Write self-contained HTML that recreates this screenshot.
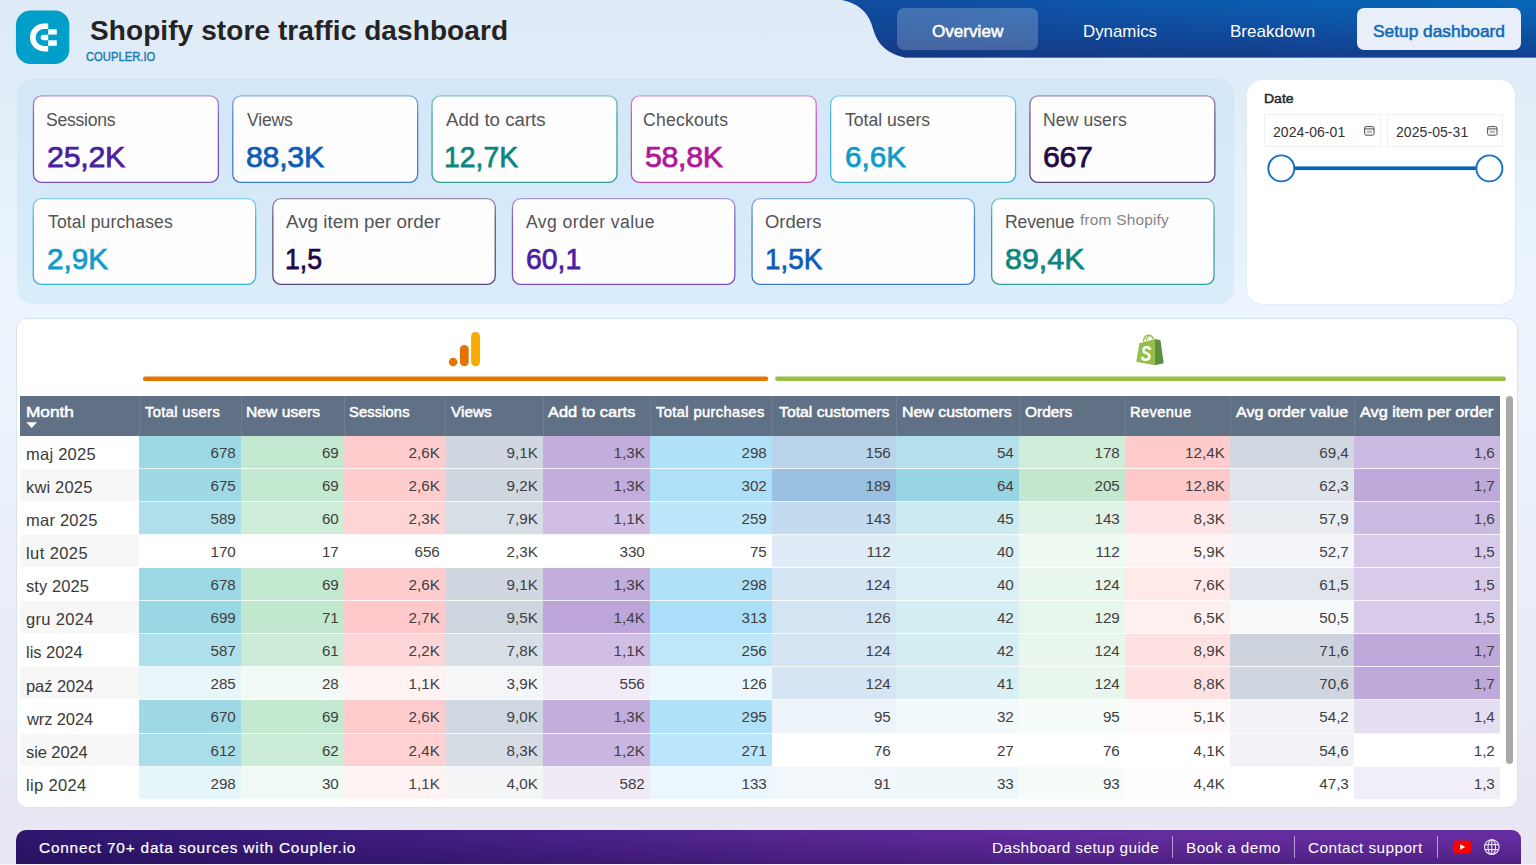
<!DOCTYPE html>
<html lang="en"><head><meta charset="utf-8"><title>Shopify store traffic dashboard</title>
<style>
*{box-sizing:border-box;margin:0;padding:0}
html,body{width:1536px;height:865px;overflow:hidden}
body{position:relative;font-family:"Liberation Sans",sans-serif;color:#333;
 background:linear-gradient(180deg,#dfebf7 0px,#e0ecf7 80px,#e5f0f9 160px,#ecf5fd 310px,#ebf2fb 450px,#e9edf8 640px,#e8e8f4 790px,#e8e7f3 865px)}
.abs{position:absolute}
.t{position:absolute;white-space:nowrap;line-height:1}
/* header */
.logo{position:absolute;left:16px;top:10.4px;width:53.5px;height:53.6px;border-radius:14.5px;background:#009fca}
.title{left:90px;top:15px;font-size:27.5px;font-weight:700;color:#252423;letter-spacing:-0.2px}
.brand{left:87px;top:51.5px;font-size:11px;font-weight:700;color:#1a7db3;letter-spacing:0px}
.nav{position:absolute;left:820px;top:0;width:716px;height:60px}
.btn{position:absolute;top:7.8px;height:42.7px;border-radius:7px}
.btn.ov{left:897px;width:141.4px;background:rgba(255,255,255,.21)}
.btn.su{left:1357px;width:164.2px;background:#e8eff9}
.nt{font-size:16px;color:#fff;top:22.5px}
/* kpi */
.kpanel{position:absolute;left:17px;top:79.3px;width:1217px;height:225px;border-radius:15px;background:linear-gradient(180deg,#d3e7f8 0%,#d5e9f9 50%,#d9edfb 100%)}
.card{position:absolute;height:88px;border-radius:8.5px;background:#fdfdfe;border:1.3px solid #888}
.card .l{position:absolute;left:12.8px;top:15px;font-size:17.5px;color:#4d4d4d;white-space:nowrap;line-height:1}
.card .v{position:absolute;left:13.2px;top:45px;font-size:31px;font-weight:700;white-space:nowrap;line-height:1}
.card .l small{font-size:14.5px;color:#777}
.r1{top:95.2px;width:186.2px}
.r2{top:197.9px;width:223.8px}
/* date */
.dpanel{position:absolute;left:1247px;top:79.5px;width:268.4px;height:224.5px;border-radius:15px;background:#fff;box-shadow:0 0 0 0.6px #dbe7f1}
.dlabel{left:1265px;top:92px;font-size:13px;font-weight:700;color:#252423}
.dinput{position:absolute;top:114px;height:33px;border:1px solid #f0f0f2;background:#fff}
.dinput .t{left:9.5px;top:9.5px;font-size:13.8px;color:#333}
.track{position:absolute;left:1281px;top:166.4px;width:208px;height:3.7px;background:#0c62b5}
.knob{position:absolute;top:154.5px;width:28px;height:28px;border-radius:50%;background:#fff;border:1.9px solid #1a6fc0}
/* table panel */
.tpanel{position:absolute;left:16px;top:317.8px;width:1502px;height:490.3px;border-radius:11px;background:#fff;border:1px solid #d7e5f0}
.bar{position:absolute;top:376.4px;height:4.6px;border-radius:2.3px}
.tbl{position:absolute;left:0;top:0}
.th{position:absolute;top:395.5px;height:40.5px;background:#617185;border-left:1px solid #6e7d91;color:#fff;font-weight:700;font-size:14.5px;white-space:nowrap}
.th:first-child{border-left:none}
.th .ht{position:absolute;left:6px;top:8.5px;line-height:1}
.th .sort{position:absolute;left:6px;top:26.8px;width:0;height:0;border-left:5.3px solid transparent;border-right:5.3px solid transparent;border-top:5.8px solid #fff}
.tr{position:absolute;left:0;width:1536px}
.mc,.td{position:absolute;top:0;height:100%;white-space:nowrap;border-bottom:1px solid rgba(255,255,255,.8)}
.mc{font-size:16px;color:#333;padding-left:6px;line-height:36.5px}
.td{font-size:15.2px;color:#404040;text-align:right;padding-right:5.2px;line-height:33.6px}
.sbar{position:absolute;left:1506px;top:396px;width:7px;height:368px;border-radius:3.5px;background:#a9a9a9}
/* footer */
.footer{position:absolute;left:16.1px;top:829.8px;width:1505px;height:33.8px;border-radius:10px 9px 0 0;
 background:linear-gradient(90deg,#2e176d 0%,#3e1d7f 25%,#552691 50%,#652c9e 75%,#672da0 100%)}
.footer:after{content:"";position:absolute;left:0;top:0;right:0;bottom:0;border-radius:inherit;background:linear-gradient(180deg,rgba(20,0,60,0) 15%,rgba(20,0,60,.27) 100%)}
.ft{font-size:15.5px;color:#fff;top:840px}
.sep{position:absolute;top:836.2px;width:1px;height:21.6px;background:rgba(255,255,255,.55)}
.strip{position:absolute;left:0;top:863.6px;width:1536px;height:2px;background:#f3f3f8}

</style></head>
<body>
<!-- header -->
<svg class="abs" style="left:10px;top:5px" width="70" height="65" viewBox="10 5 70 65">
 <rect x="15.95" y="10.45" width="53.4" height="53.55" rx="14.5" fill="#009fca"/>
 <path fill="#fff" d="M48.2 23.4 L44 23.4 A14 14 0 0 0 44 51.4 L48.2 51.4 L48.2 45.9 L44 45.9 A8.4 8.4 0 0 1 44 29.1 L48.2 29.1 Z"/>
 <path fill="#fff" d="M48.2 34.7 L43.5 34.7 A2.8 2.8 0 0 0 43.5 40.3 L48.2 40.3 Z"/>
 <rect fill="#fff" x="48.2" y="29.3" width="8.6" height="5.3"/>
 <rect fill="#fff" x="48.2" y="40.3" width="8.6" height="5.5"/>
</svg>
<svg class="abs" style="left:820px;top:0" width="716" height="60" viewBox="820 0 716 60">
 <defs><linearGradient id="ng" x1="0" y1="1" x2="1" y2="0" gradientUnits="objectBoundingBox">
  <stop offset="0" stop-color="#153a85"/><stop offset="0.5" stop-color="#104c9f"/><stop offset="1" stop-color="#0669ba"/></linearGradient>
  <linearGradient id="ng2" x1="0" y1="0" x2="0" y2="1"><stop offset="0" stop-color="#0b5fb3" stop-opacity="0.0"/><stop offset="1" stop-color="#15357f" stop-opacity="0.55"/></linearGradient></defs>
 <path fill="url(#ng)" d="M836 -1 C856 1.5 866.5 10.5 871.3 23.3 C875.5 36 878 51 905 57.5 L1536 57.5 L1536 -1 Z"/>
 <path fill="url(#ng2)" d="M836 -1 C856 1.5 866.5 10.5 871.3 23.3 C875.5 36 878 51 905 57.5 L1536 57.5 L1536 -1 Z"/>
</svg>
<div class="btn ov"></div>
<div class="btn su"></div>

<!-- KPI panel -->
<div class="kpanel"></div>
<svg class="abs" style="left:17px;top:79px" width="1218" height="225" viewBox="17 79 1218 225"><defs>
<linearGradient id="g_purple" x1="0" y1="0" x2="0" y2="1"><stop offset="0" stop-color="#ad92d7"/><stop offset="0.25" stop-color="#855ec3"/><stop offset="1" stop-color="#7a50be"/></linearGradient>
<linearGradient id="g_blue" x1="0" y1="0" x2="0" y2="1"><stop offset="0" stop-color="#86aede"/><stop offset="0.25" stop-color="#4c86ce"/><stop offset="1" stop-color="#3c7cca"/></linearGradient>
<linearGradient id="g_teal" x1="0" y1="0" x2="0" y2="1"><stop offset="0" stop-color="#83c2be"/><stop offset="0.25" stop-color="#47a49e"/><stop offset="1" stop-color="#379c96"/></linearGradient>
<linearGradient id="g_magenta" x1="0" y1="0" x2="0" y2="1"><stop offset="0" stop-color="#dc90d1"/><stop offset="0.25" stop-color="#cb5abb"/><stop offset="1" stop-color="#c64cb5"/></linearGradient>
<linearGradient id="g_cyan" x1="0" y1="0" x2="0" y2="1"><stop offset="0" stop-color="#85cee6"/><stop offset="0.25" stop-color="#4bb6d9"/><stop offset="1" stop-color="#3bb0d6"/></linearGradient>
<linearGradient id="g_dark" x1="0" y1="0" x2="0" y2="1"><stop offset="0" stop-color="#998dab"/><stop offset="0.25" stop-color="#675683"/><stop offset="1" stop-color="#5a4778"/></linearGradient>
</defs>
<rect x="33.45" y="95.85" width="184.90" height="86.60" rx="8.2" fill="#fdfdfe" stroke="url(#g_purple)" stroke-width="1.3"/>
<rect x="232.75" y="95.85" width="184.90" height="86.60" rx="8.2" fill="#fdfdfe" stroke="url(#g_blue)" stroke-width="1.3"/>
<rect x="432.05" y="95.85" width="184.90" height="86.60" rx="8.2" fill="#fdfdfe" stroke="url(#g_teal)" stroke-width="1.3"/>
<rect x="631.35" y="95.85" width="184.90" height="86.60" rx="8.2" fill="#fdfdfe" stroke="url(#g_magenta)" stroke-width="1.3"/>
<rect x="830.65" y="95.85" width="184.90" height="86.60" rx="8.2" fill="#fdfdfe" stroke="url(#g_cyan)" stroke-width="1.3"/>
<rect x="1029.95" y="95.85" width="184.90" height="86.60" rx="8.2" fill="#fdfdfe" stroke="url(#g_dark)" stroke-width="1.3"/>
<rect x="33.25" y="198.55" width="222.40" height="85.90" rx="8.2" fill="#fdfdfe" stroke="url(#g_cyan)" stroke-width="1.3"/>
<rect x="272.85" y="198.55" width="222.40" height="85.90" rx="8.2" fill="#fdfdfe" stroke="url(#g_dark)" stroke-width="1.3"/>
<rect x="512.45" y="198.55" width="222.40" height="85.90" rx="8.2" fill="#fdfdfe" stroke="url(#g_purple)" stroke-width="1.3"/>
<rect x="752.05" y="198.55" width="222.40" height="85.90" rx="8.2" fill="#fdfdfe" stroke="url(#g_blue)" stroke-width="1.3"/>
<rect x="991.65" y="198.55" width="222.40" height="85.90" rx="8.2" fill="#fdfdfe" stroke="url(#g_teal)" stroke-width="1.3"/>
</svg>

<!-- Date panel -->
<div class="dpanel"></div>
<div class="dinput" style="left:1264.3px;width:116.3px">
 <svg class="abs" style="left:99px;top:10.5px" width="11" height="10" viewBox="0 0 11 10"><rect x="0.6" y="0.6" width="9.4" height="8.6" rx="1.6" fill="#fff" stroke="#4a4a4a" stroke-width="1"/><line x1="0.6" y1="2.9" x2="10" y2="2.9" stroke="#4a4a4a" stroke-width="1"/><rect x="2.6" y="4.6" width="5.4" height="2.6" fill="#bbb"/></svg></div>
<div class="dinput" style="left:1386.8px;width:116px">
 <svg class="abs" style="left:99px;top:10.5px" width="11" height="10" viewBox="0 0 11 10"><rect x="0.6" y="0.6" width="9.4" height="8.6" rx="1.6" fill="#fff" stroke="#4a4a4a" stroke-width="1"/><line x1="0.6" y1="2.9" x2="10" y2="2.9" stroke="#4a4a4a" stroke-width="1"/><rect x="2.6" y="4.6" width="5.4" height="2.6" fill="#bbb"/></svg></div>
<svg class="abs" style="left:1260px;top:150px" width="250" height="38" viewBox="1260 150 250 38">
 <rect x="1281" y="166.4" width="208" height="3.7" fill="#0c62b5"/>
 <circle cx="1281.3" cy="168.4" r="13" fill="#fff" stroke="#1a6fc0" stroke-width="1.9"/>
 <circle cx="1489.4" cy="168.4" r="13" fill="#fff" stroke="#1a6fc0" stroke-width="1.9"/>
</svg>

<!-- Table panel -->
<div class="tpanel"></div>
<svg class="abs" style="left:130px;top:370px" width="1390" height="70" viewBox="130 370 1390 70">
 <rect x="142.9" y="376.5" width="625.3" height="4.4" rx="2.2" fill="#e37400"/>
 <rect x="775.1" y="376.4" width="730.9" height="4.5" rx="2.25" fill="#95bf47"/>
</svg>
<svg class="abs" style="left:445px;top:328px" width="40" height="42" viewBox="445 328 40 42">
 <circle cx="453.1" cy="362" r="4.3" fill="#e37400"/>
 <rect x="459.9" y="344.9" width="8.8" height="21.3" rx="4.4" fill="#e37400"/>
 <rect x="471.1" y="332" width="8.9" height="34.3" rx="4.45" fill="#f9ab00"/>
</svg>
<svg class="abs" style="left:1130px;top:330px" width="40" height="40" viewBox="1130 330 40 40">
 <path d="M1143.3 341.5 C1144 337 1146.5 335.3 1148.4 335.3 C1150.6 335.3 1152.6 336.8 1153.6 339.2" fill="none" stroke="#95bf47" stroke-width="1.4"/>
 <path d="M1146.2 340.7 C1146.8 337.6 1148 336 1149.6 335.9" fill="none" stroke="#95bf47" stroke-width="1.1"/>
 <path d="M1139.4 343.2 L1154.8 339 L1154.8 365.2 L1136.3 361.7 Z" fill="#95bf47"/>
 <path d="M1154.8 339 L1160.5 340.2 L1163.7 363.2 L1154.8 365.2 Z" fill="#5e8e3e"/>
 <text transform="translate(1140.8 360.9) scale(0.8 1.16)" font-family="Liberation Sans, sans-serif" font-size="19.8" font-weight="700" font-style="italic" fill="#fff">S</text>
</svg>
<div class="sbar"></div>
<div class="tbl">
<div class="th" style="left:20.0px;width:119.0px"></div>
<div class="th" style="left:139.0px;width:102.0px"></div>
<div class="th" style="left:241.0px;width:103.0px"></div>
<div class="th" style="left:344.0px;width:101.0px"></div>
<div class="th" style="left:445.0px;width:98.0px"></div>
<div class="th" style="left:543.0px;width:107.0px"></div>
<div class="th" style="left:650.0px;width:122.0px"></div>
<div class="th" style="left:772.0px;width:124.0px"></div>
<div class="th" style="left:896.0px;width:123.0px"></div>
<div class="th" style="left:1019.0px;width:106.0px"></div>
<div class="th" style="left:1125.0px;width:105.0px"></div>
<div class="th" style="left:1230.0px;width:124.0px"></div>
<div class="th" style="left:1354.0px;width:146.0px"></div>
<div class="tr" style="top:436px;height:33px"><div class="mc" style="left:20.0px;width:119.0px;background:#ffffff"></div><div class="td" style="left:139.0px;width:102.0px;background:#9dd9e5">678</div><div class="td" style="left:241.0px;width:103.0px;background:#c3e9d0">69</div><div class="td" style="left:344.0px;width:101.0px;background:#ffccce">2,6K</div><div class="td" style="left:445.0px;width:98.0px;background:#d0d7e1">9,1K</div><div class="td" style="left:543.0px;width:107.0px;background:#c3addd">1,3K</div><div class="td" style="left:650.0px;width:122.0px;background:#b0e1f9">298</div><div class="td" style="left:772.0px;width:124.0px;background:#b8d3ea">156</div><div class="td" style="left:896.0px;width:123.0px;background:#b3e0ea">54</div><div class="td" style="left:1019.0px;width:106.0px;background:#d0edd9">178</div><div class="td" style="left:1125.0px;width:105.0px;background:#ffcbcb">12,4K</div><div class="td" style="left:1230.0px;width:124.0px;background:#d2d8e1">69,4</div><div class="td" style="left:1354.0px;width:146.0px;background:#cbbae1">1,6</div></div>
<div class="tr" style="top:469px;height:33px"><div class="mc" style="left:20.0px;width:119.0px;background:#f7f7f7"></div><div class="td" style="left:139.0px;width:102.0px;background:#9ed9e5">675</div><div class="td" style="left:241.0px;width:103.0px;background:#c3e9d0">69</div><div class="td" style="left:344.0px;width:101.0px;background:#ffccce">2,6K</div><div class="td" style="left:445.0px;width:98.0px;background:#cfd7e0">9,2K</div><div class="td" style="left:543.0px;width:107.0px;background:#c3addd">1,3K</div><div class="td" style="left:650.0px;width:122.0px;background:#afe0f9">302</div><div class="td" style="left:772.0px;width:124.0px;background:#9bc1e2">189</div><div class="td" style="left:896.0px;width:123.0px;background:#97d5e2">64</div><div class="td" style="left:1019.0px;width:106.0px;background:#c3e8cf">205</div><div class="td" style="left:1125.0px;width:105.0px;background:#ffc8c9">12,8K</div><div class="td" style="left:1230.0px;width:124.0px;background:#e0e4eb">62,3</div><div class="td" style="left:1354.0px;width:146.0px;background:#bea9da">1,7</div></div>
<div class="tr" style="top:502px;height:33px"><div class="mc" style="left:20.0px;width:119.0px;background:#ffffff"></div><div class="td" style="left:139.0px;width:102.0px;background:#aedfea">589</div><div class="td" style="left:241.0px;width:103.0px;background:#ceedd8">60</div><div class="td" style="left:344.0px;width:101.0px;background:#ffd4d5">2,3K</div><div class="td" style="left:445.0px;width:98.0px;background:#d8dee6">7,9K</div><div class="td" style="left:543.0px;width:107.0px;background:#d0bee4">1,1K</div><div class="td" style="left:650.0px;width:122.0px;background:#bee6fa">259</div><div class="td" style="left:772.0px;width:124.0px;background:#c4daee">143</div><div class="td" style="left:896.0px;width:123.0px;background:#ccebf1">45</div><div class="td" style="left:1019.0px;width:106.0px;background:#e0f3e6">143</div><div class="td" style="left:1125.0px;width:105.0px;background:#ffe4e5">8,3K</div><div class="td" style="left:1230.0px;width:124.0px;background:#e9ecf1">57,9</div><div class="td" style="left:1354.0px;width:146.0px;background:#cbbae1">1,6</div></div>
<div class="tr" style="top:535px;height:33px"><div class="mc" style="left:20.0px;width:119.0px;background:#f7f7f7"></div><div class="td" style="left:139.0px;width:102.0px;background:#ffffff">170</div><div class="td" style="left:241.0px;width:103.0px;background:#ffffff">17</div><div class="td" style="left:344.0px;width:101.0px;background:#ffffff">656</div><div class="td" style="left:445.0px;width:98.0px;background:#ffffff">2,3K</div><div class="td" style="left:543.0px;width:107.0px;background:#ffffff">330</div><div class="td" style="left:650.0px;width:122.0px;background:#ffffff">75</div><div class="td" style="left:772.0px;width:124.0px;background:#dfebf6">112</div><div class="td" style="left:896.0px;width:123.0px;background:#daf0f5">40</div><div class="td" style="left:1019.0px;width:106.0px;background:#eef9f2">112</div><div class="td" style="left:1125.0px;width:105.0px;background:#fff4f4">5,9K</div><div class="td" style="left:1230.0px;width:124.0px;background:#f4f5f8">52,7</div><div class="td" style="left:1354.0px;width:146.0px;background:#d8cbe9">1,5</div></div>
<div class="tr" style="top:568px;height:33px"><div class="mc" style="left:20.0px;width:119.0px;background:#ffffff"></div><div class="td" style="left:139.0px;width:102.0px;background:#9dd9e5">678</div><div class="td" style="left:241.0px;width:103.0px;background:#c3e9d0">69</div><div class="td" style="left:344.0px;width:101.0px;background:#ffccce">2,6K</div><div class="td" style="left:445.0px;width:98.0px;background:#d0d7e1">9,1K</div><div class="td" style="left:543.0px;width:107.0px;background:#c3addd">1,3K</div><div class="td" style="left:650.0px;width:122.0px;background:#b0e1f9">298</div><div class="td" style="left:772.0px;width:124.0px;background:#d5e5f3">124</div><div class="td" style="left:896.0px;width:123.0px;background:#daf0f5">40</div><div class="td" style="left:1019.0px;width:106.0px;background:#e9f6ed">124</div><div class="td" style="left:1125.0px;width:105.0px;background:#ffe9e9">7,6K</div><div class="td" style="left:1230.0px;width:124.0px;background:#e2e6ec">61,5</div><div class="td" style="left:1354.0px;width:146.0px;background:#d8cbe9">1,5</div></div>
<div class="tr" style="top:601px;height:33px"><div class="mc" style="left:20.0px;width:119.0px;background:#f7f7f7"></div><div class="td" style="left:139.0px;width:102.0px;background:#99d7e4">699</div><div class="td" style="left:241.0px;width:103.0px;background:#c1e8ce">71</div><div class="td" style="left:344.0px;width:101.0px;background:#ffc9cb">2,7K</div><div class="td" style="left:445.0px;width:98.0px;background:#cdd5df">9,5K</div><div class="td" style="left:543.0px;width:107.0px;background:#bda5d9">1,4K</div><div class="td" style="left:650.0px;width:122.0px;background:#abdff9">313</div><div class="td" style="left:772.0px;width:124.0px;background:#d3e4f2">126</div><div class="td" style="left:896.0px;width:123.0px;background:#d5eef3">42</div><div class="td" style="left:1019.0px;width:106.0px;background:#e6f6eb">129</div><div class="td" style="left:1125.0px;width:105.0px;background:#fff0f0">6,5K</div><div class="td" style="left:1230.0px;width:124.0px;background:#f8f9fb">50,5</div><div class="td" style="left:1354.0px;width:146.0px;background:#d8cbe9">1,5</div></div>
<div class="tr" style="top:634px;height:33px"><div class="mc" style="left:20.0px;width:119.0px;background:#ffffff"></div><div class="td" style="left:139.0px;width:102.0px;background:#afdfea">587</div><div class="td" style="left:241.0px;width:103.0px;background:#ccecd7">61</div><div class="td" style="left:344.0px;width:101.0px;background:#ffd6d8">2,2K</div><div class="td" style="left:445.0px;width:98.0px;background:#d9dfe7">7,8K</div><div class="td" style="left:543.0px;width:107.0px;background:#d0bee4">1,1K</div><div class="td" style="left:650.0px;width:122.0px;background:#bfe7fa">256</div><div class="td" style="left:772.0px;width:124.0px;background:#d5e5f3">124</div><div class="td" style="left:896.0px;width:123.0px;background:#d5eef3">42</div><div class="td" style="left:1019.0px;width:106.0px;background:#e9f6ed">124</div><div class="td" style="left:1125.0px;width:105.0px;background:#ffe1e1">8,9K</div><div class="td" style="left:1230.0px;width:124.0px;background:#cdd4de">71,6</div><div class="td" style="left:1354.0px;width:146.0px;background:#bea9da">1,7</div></div>
<div class="tr" style="top:667px;height:33px"><div class="mc" style="left:20.0px;width:119.0px;background:#f7f7f7"></div><div class="td" style="left:139.0px;width:102.0px;background:#e9f6f9">285</div><div class="td" style="left:241.0px;width:103.0px;background:#f2faf5">28</div><div class="td" style="left:344.0px;width:101.0px;background:#fff3f4">1,1K</div><div class="td" style="left:445.0px;width:98.0px;background:#f4f6f8">3,9K</div><div class="td" style="left:543.0px;width:107.0px;background:#f1ecf7">556</div><div class="td" style="left:650.0px;width:122.0px;background:#edf8fe">126</div><div class="td" style="left:772.0px;width:124.0px;background:#d5e5f3">124</div><div class="td" style="left:896.0px;width:123.0px;background:#d8eff4">41</div><div class="td" style="left:1019.0px;width:106.0px;background:#e9f6ed">124</div><div class="td" style="left:1125.0px;width:105.0px;background:#ffe1e2">8,8K</div><div class="td" style="left:1230.0px;width:124.0px;background:#cfd6df">70,6</div><div class="td" style="left:1354.0px;width:146.0px;background:#bea9da">1,7</div></div>
<div class="tr" style="top:700px;height:34px"><div class="mc" style="left:20.0px;width:119.0px;background:#ffffff"></div><div class="td" style="left:139.0px;width:102.0px;background:#9fd9e5">670</div><div class="td" style="left:241.0px;width:103.0px;background:#c3e9d0">69</div><div class="td" style="left:344.0px;width:101.0px;background:#ffccce">2,6K</div><div class="td" style="left:445.0px;width:98.0px;background:#d0d8e1">9,0K</div><div class="td" style="left:543.0px;width:107.0px;background:#c3addd">1,3K</div><div class="td" style="left:650.0px;width:122.0px;background:#b1e1f9">295</div><div class="td" style="left:772.0px;width:124.0px;background:#eef5fa">95</div><div class="td" style="left:896.0px;width:123.0px;background:#f1f9fb">32</div><div class="td" style="left:1019.0px;width:106.0px;background:#f6fcf8">95</div><div class="td" style="left:1125.0px;width:105.0px;background:#fff9f9">5,1K</div><div class="td" style="left:1230.0px;width:124.0px;background:#f1f3f6">54,2</div><div class="td" style="left:1354.0px;width:146.0px;background:#e5ddf0">1,4</div></div>
<div class="tr" style="top:734px;height:33px"><div class="mc" style="left:20.0px;width:119.0px;background:#f7f7f7"></div><div class="td" style="left:139.0px;width:102.0px;background:#aadee8">612</div><div class="td" style="left:241.0px;width:103.0px;background:#cbecd6">62</div><div class="td" style="left:344.0px;width:101.0px;background:#ffd1d3">2,4K</div><div class="td" style="left:445.0px;width:98.0px;background:#d5dce4">8,3K</div><div class="td" style="left:543.0px;width:107.0px;background:#c9b6e0">1,2K</div><div class="td" style="left:650.0px;width:122.0px;background:#bae5fa">271</div><div class="td" style="left:772.0px;width:124.0px;background:#ffffff">76</div><div class="td" style="left:896.0px;width:123.0px;background:#ffffff">27</div><div class="td" style="left:1019.0px;width:106.0px;background:#ffffff">76</div><div class="td" style="left:1125.0px;width:105.0px;background:#ffffff">4,1K</div><div class="td" style="left:1230.0px;width:124.0px;background:#f0f2f5">54,6</div><div class="td" style="left:1354.0px;width:146.0px;background:#ffffff">1,2</div></div>
<div class="tr" style="top:767px;height:33px"><div class="mc" style="left:20.0px;width:119.0px;background:#ffffff"></div><div class="td" style="left:139.0px;width:102.0px;background:#e6f5f8">298</div><div class="td" style="left:241.0px;width:103.0px;background:#f0f9f3">30</div><div class="td" style="left:344.0px;width:101.0px;background:#fff3f4">1,1K</div><div class="td" style="left:445.0px;width:98.0px;background:#f3f5f7">4,0K</div><div class="td" style="left:543.0px;width:107.0px;background:#efeaf6">582</div><div class="td" style="left:650.0px;width:122.0px;background:#ebf7fe">133</div><div class="td" style="left:772.0px;width:124.0px;background:#f2f7fb">91</div><div class="td" style="left:896.0px;width:123.0px;background:#eef8fa">33</div><div class="td" style="left:1019.0px;width:106.0px;background:#f7fcf9">93</div><div class="td" style="left:1125.0px;width:105.0px;background:#fffdfd">4,4K</div><div class="td" style="left:1230.0px;width:124.0px;background:#ffffff">47,3</div><div class="td" style="left:1354.0px;width:146.0px;background:#f2eef8">1,3</div></div>
</div>
<svg class="abs" id="sortarrow" style="left:24px;top:420px" width="16" height="10" viewBox="24 420 16 10"><path d="M26.3 422.3 L37 422.3 L31.65 428.1 Z" fill="#fff"/></svg>
<!-- footer -->
<div class="footer"></div>
<div class="strip"></div>
<div class="sep" style="left:1172px"></div>
<div class="sep" style="left:1294px"></div>
<div class="sep" style="left:1437.2px"></div>
<svg class="abs" style="left:1450px;top:836px" width="54" height="24" viewBox="1450 836 54 24">
 <rect x="1453.1" y="840.5" width="18.3" height="12.8" rx="3.4" fill="#ff0000"/>
 <path d="M1460.2 844.2 L1465.2 847 L1460.2 849.8 Z" fill="#fff"/>
 <g fill="none" stroke="#efe9f7" stroke-width="1.1">
  <circle cx="1491.8" cy="847.1" r="7.3"/>
  <ellipse cx="1491.8" cy="847.1" rx="3.8" ry="7.3"/>
  <line x1="1491.8" y1="839.8" x2="1491.8" y2="854.4"/>
  <line x1="1485" y1="844.6" x2="1498.6" y2="844.6"/>
  <line x1="1485" y1="849.6" x2="1498.6" y2="849.6"/>
 </g>
</svg>
<!-- texts -->
<div class="t" id="title" style="left:90px;top:17px;font-size:28.00px;font-weight:700;color:#252423;letter-spacing:0.087px;">Shopify store traffic dashboard</div>
<div class="t" id="brand" style="left:86.26px;top:52px;font-size:11.90px;font-weight:400;color:#1a7db3;transform:scaleX(0.9444);transform-origin:0 0;-webkit-text-stroke:0.4px #1a7db3;">COUPLER.IO</div>
<div class="t" id="n1" style="left:931.80px;top:24px;font-size:15.70px;font-weight:400;color:#fff;transform:scaleX(1.0894);transform-origin:0 0;-webkit-text-stroke:0.5px #fff;">Overview</div>
<div class="t" id="n2" style="left:1083.43px;top:24px;font-size:15.70px;font-weight:400;color:#fff;transform:scaleX(1.0746);transform-origin:0 0;">Dynamics</div>
<div class="t" id="n3" style="left:1230.42px;top:24px;font-size:15.70px;font-weight:400;color:#fff;transform:scaleX(1.0844);transform-origin:0 0;">Breakdown</div>
<div class="t" id="n4" style="left:1372.60px;top:24px;font-size:15.70px;font-weight:400;color:#116ab9;transform:scaleX(1.1042);transform-origin:0 0;-webkit-text-stroke:0.5px #116ab9;">Setup dashboard</div>
<div class="t" id="l1" style="left:46px;top:112px;font-size:17.60px;font-weight:400;color:#545454;letter-spacing:-0.257px;">Sessions</div>
<div class="t" id="l2" style="left:247px;top:112px;font-size:17.60px;font-weight:400;color:#545454;letter-spacing:-0.175px;">Views</div>
<div class="t" id="l3" style="left:445.60px;top:112px;font-size:17.60px;font-weight:400;color:#545454;transform:scaleX(1.0613);transform-origin:0 0;">Add to carts</div>
<div class="t" id="l4" style="left:643px;top:112px;font-size:17.60px;font-weight:400;color:#545454;letter-spacing:0.225px;">Checkouts</div>
<div class="t" id="l5" style="left:845px;top:112px;font-size:17.60px;font-weight:400;color:#545454;letter-spacing:0.000px;">Total users</div>
<div class="t" id="l6" style="left:1043px;top:112px;font-size:17.60px;font-weight:400;color:#545454;letter-spacing:0.075px;">New users</div>
<div class="t" id="l7" style="left:48px;top:214px;font-size:17.60px;font-weight:400;color:#545454;letter-spacing:0.107px;">Total purchases</div>
<div class="t" id="l8" style="left:285.60px;top:214px;font-size:17.60px;font-weight:400;color:#545454;transform:scaleX(1.0694);transform-origin:0 0;">Avg item per order</div>
<div class="t" id="l9" style="left:526px;top:214px;font-size:17.60px;font-weight:400;color:#545454;letter-spacing:0.400px;">Avg order value</div>
<div class="t" id="l10" style="left:764.85px;top:214px;font-size:17.60px;font-weight:400;color:#545454;transform:scaleX(1.0500);transform-origin:0 0;">Orders</div>
<div class="t" id="l11" style="left:1005px;top:214px;font-size:17.60px;font-weight:400;color:#545454;letter-spacing:-0.167px;">Revenue</div>
<div class="t" id="l12" style="left:1080px;top:212px;font-size:15.40px;font-weight:400;color:#858585;letter-spacing:0.218px;">from Shopify</div>
<div class="t" id="v1" style="left:47px;top:141px;font-size:30.40px;font-weight:400;color:#4b1fa0;letter-spacing:-0.275px;-webkit-text-stroke:0.75px currentColor;">25,2K</div>
<div class="t" id="v2" style="left:246px;top:141px;font-size:30.40px;font-weight:400;color:#0f5cb8;letter-spacing:-0.300px;-webkit-text-stroke:0.75px currentColor;">88,3K</div>
<div class="t" id="v3" style="left:444.13px;top:141px;font-size:30.40px;font-weight:400;color:#0f857f;transform:scaleX(0.9338);transform-origin:0 0;-webkit-text-stroke:0.75px currentColor;">12,7K</div>
<div class="t" id="v4" style="left:645px;top:141px;font-size:30.40px;font-weight:400;color:#b0179a;letter-spacing:-0.350px;-webkit-text-stroke:0.75px currentColor;">58,8K</div>
<div class="t" id="v5" style="left:844.62px;top:141px;font-size:30.40px;font-weight:400;color:#0f9bc8;transform:scaleX(0.9770);transform-origin:0 0;-webkit-text-stroke:0.75px currentColor;">6,6K</div>
<div class="t" id="v6" style="left:1043px;top:141px;font-size:30.40px;font-weight:400;color:#1f0a45;letter-spacing:-0.400px;-webkit-text-stroke:0.75px currentColor;">667</div>
<div class="t" id="v7" style="left:47.22px;top:243px;font-size:30.40px;font-weight:400;color:#0f9bc8;transform:scaleX(0.9770);transform-origin:0 0;-webkit-text-stroke:0.75px currentColor;">2,9K</div>
<div class="t" id="v8" style="left:285.25px;top:243px;font-size:30.40px;font-weight:400;color:#1f0a45;transform:scaleX(0.8769);transform-origin:0 0;-webkit-text-stroke:0.75px currentColor;">1,5</div>
<div class="t" id="v9" style="left:525.87px;top:243px;font-size:30.40px;font-weight:400;color:#4b1fa0;transform:scaleX(0.9333);transform-origin:0 0;-webkit-text-stroke:0.75px currentColor;">60,1</div>
<div class="t" id="v10" style="left:765.47px;top:243px;font-size:30.40px;font-weight:400;color:#0f5cb8;transform:scaleX(0.9150);transform-origin:0 0;-webkit-text-stroke:0.75px currentColor;">1,5K</div>
<div class="t" id="v11" style="left:1005px;top:243px;font-size:30.40px;font-weight:400;color:#0f857f;letter-spacing:0.025px;-webkit-text-stroke:0.75px currentColor;">89,4K</div>
<div class="t" id="dl" style="left:1264.34px;top:92px;font-size:13.20px;font-weight:400;color:#252423;transform:scaleX(1.0630);transform-origin:0 0;-webkit-text-stroke:0.45px #252423;">Date</div>
<div class="t" id="d1" style="left:1273px;top:125px;font-size:14.00px;font-weight:400;color:#333;letter-spacing:0.067px;">2024-06-01</div>
<div class="t" id="d2" style="left:1396px;top:125px;font-size:14.00px;font-weight:400;color:#333;letter-spacing:0.067px;">2025-05-31</div>
<div class="t" id="f0" style="left:39px;top:840px;font-size:15.40px;font-weight:400;color:#fff;letter-spacing:0.797px;-webkit-text-stroke:0.2px #fff;">Connect 70+ data sources with Coupler.io</div>
<div class="t" id="f1" style="left:992px;top:840px;font-size:15.40px;font-weight:400;color:#fff;letter-spacing:0.380px;">Dashboard setup guide</div>
<div class="t" id="f2" style="left:1186px;top:840px;font-size:15.40px;font-weight:400;color:#fff;letter-spacing:0.370px;">Book a demo</div>
<div class="t" id="f3" style="left:1308px;top:840px;font-size:15.40px;font-weight:400;color:#fff;letter-spacing:0.393px;">Contact support</div>
<div class="t" id="h0" style="left:25.83px;top:405px;font-size:14.70px;font-weight:400;color:#fff;transform:scaleX(1.1744);transform-origin:0 0;-webkit-text-stroke:0.5px #fff;">Month</div>
<div class="t" id="h1" style="left:145px;top:405px;font-size:14.70px;font-weight:400;color:#fff;letter-spacing:0.370px;-webkit-text-stroke:0.5px #fff;">Total users</div>
<div class="t" id="h2" style="left:245.73px;top:405px;font-size:14.70px;font-weight:400;color:#fff;transform:scaleX(1.0662);transform-origin:0 0;-webkit-text-stroke:0.5px #fff;">New users</div>
<div class="t" id="h3" style="left:349px;top:405px;font-size:14.70px;font-weight:400;color:#fff;letter-spacing:0.129px;-webkit-text-stroke:0.5px #fff;">Sessions</div>
<div class="t" id="h4" style="left:450.90px;top:405px;font-size:14.70px;font-weight:400;color:#fff;transform:scaleX(1.0462);transform-origin:0 0;-webkit-text-stroke:0.5px #fff;">Views</div>
<div class="t" id="h5" style="left:548.40px;top:405px;font-size:14.70px;font-weight:400;color:#fff;transform:scaleX(1.1141);transform-origin:0 0;-webkit-text-stroke:0.5px #fff;">Add to carts</div>
<div class="t" id="h6" style="left:656px;top:405px;font-size:14.70px;font-weight:400;color:#fff;letter-spacing:0.386px;-webkit-text-stroke:0.5px #fff;">Total purchases</div>
<div class="t" id="h7" style="left:779.30px;top:405px;font-size:14.70px;font-weight:400;color:#fff;transform:scaleX(1.0728);transform-origin:0 0;-webkit-text-stroke:0.5px #fff;">Total customers</div>
<div class="t" id="h8" style="left:901.82px;top:405px;font-size:14.70px;font-weight:400;color:#fff;transform:scaleX(1.0840);transform-origin:0 0;-webkit-text-stroke:0.5px #fff;">New customers</div>
<div class="t" id="h9" style="left:1024.50px;top:405px;font-size:14.70px;font-weight:400;color:#fff;transform:scaleX(1.0511);transform-origin:0 0;-webkit-text-stroke:0.5px #fff;">Orders</div>
<div class="t" id="h10" style="left:1130px;top:405px;font-size:14.70px;font-weight:400;color:#fff;letter-spacing:0.383px;-webkit-text-stroke:0.5px #fff;">Revenue</div>
<div class="t" id="h11" style="left:1236.00px;top:405px;font-size:14.70px;font-weight:400;color:#fff;transform:scaleX(1.0931);transform-origin:0 0;-webkit-text-stroke:0.5px #fff;">Avg order value</div>
<div class="t" id="h12" style="left:1359.90px;top:405px;font-size:14.70px;font-weight:400;color:#fff;transform:scaleX(1.1050);transform-origin:0 0;-webkit-text-stroke:0.5px #fff;">Avg item per order</div>
<div class="t" id="m0" style="left:26px;top:446px;font-size:16.50px;font-weight:400;color:#3a3a3a;letter-spacing:0.243px;">maj 2025</div>
<div class="t" id="m1" style="left:26px;top:479px;font-size:16.50px;font-weight:400;color:#3a3a3a;letter-spacing:0.171px;">kwi 2025</div>
<div class="t" id="m2" style="left:26px;top:512px;font-size:16.50px;font-weight:400;color:#3a3a3a;letter-spacing:0.229px;">mar 2025</div>
<div class="t" id="m3" style="left:26px;top:545px;font-size:16.50px;font-weight:400;color:#3a3a3a;letter-spacing:0.414px;">lut 2025</div>
<div class="t" id="m4" style="left:26px;top:578px;font-size:16.50px;font-weight:400;color:#3a3a3a;letter-spacing:0.071px;">sty 2025</div>
<div class="t" id="m5" style="left:26px;top:611px;font-size:16.50px;font-weight:400;color:#3a3a3a;letter-spacing:0.314px;">gru 2024</div>
<div class="t" id="m6" style="left:26px;top:644px;font-size:16.50px;font-weight:400;color:#3a3a3a;letter-spacing:-0.029px;">lis 2024</div>
<div class="t" id="m7" style="left:26px;top:678px;font-size:16.50px;font-weight:400;color:#3a3a3a;letter-spacing:-0.057px;">paź 2024</div>
<div class="t" id="m8" style="left:27px;top:711px;font-size:16.50px;font-weight:400;color:#3a3a3a;letter-spacing:-0.114px;">wrz 2024</div>
<div class="t" id="m9" style="left:26px;top:744px;font-size:16.50px;font-weight:400;color:#3a3a3a;letter-spacing:-0.086px;">sie 2024</div>
<div class="t" id="m10" style="left:26px;top:777px;font-size:16.50px;font-weight:400;color:#3a3a3a;letter-spacing:0.357px;">lip 2024</div>
</body></html>
